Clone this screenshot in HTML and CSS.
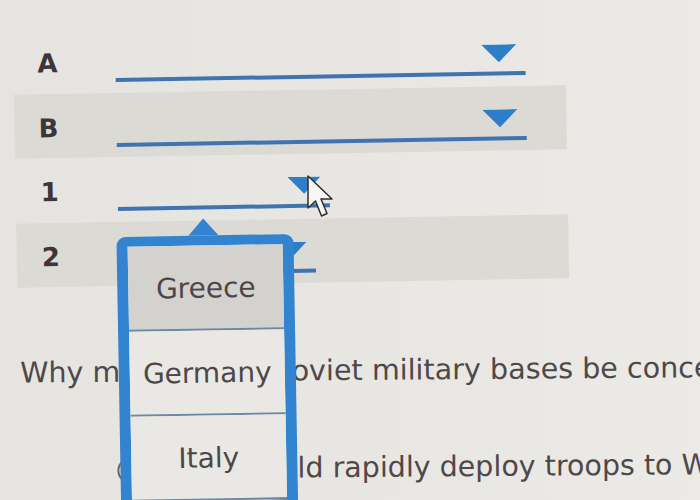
FILE: index.html
```html
<!DOCTYPE html>
<html lang="en">
<head>
<meta charset="utf-8">
<title>Matching</title>
<link rel="stylesheet" href="styles.css">
</head>
<body>
<div class="page">
  <div class="matches">
    <div class="row">
      <div class="label">A</div>
      <div class="select w-long">
        <svg class="caret" width="35" height="18" viewBox="0 0 35 18"><polygon points="0,0 35,0 17.5,18"/></svg>
      </div>
    </div>
    <div class="row band">
      <div class="label">B</div>
      <div class="select w-long">
        <svg class="caret" width="35" height="18" viewBox="0 0 35 18"><polygon points="0,0 35,0 17.5,18"/></svg>
      </div>
    </div>
    <div class="row">
      <div class="label">1</div>
      <div class="select w-mid">
        <svg class="caret" width="33" height="17" viewBox="0 0 33 17"><polygon points="0,0 33,0 16.5,17"/></svg>
      </div>
    </div>
    <div class="row band">
      <div class="label">2</div>
      <div class="select w-short">
        <svg class="caret" width="33" height="17" viewBox="0 0 33 17"><polygon points="0,0 33,0 16.5,17"/></svg>
        <ul class="menu">
          <li class="item active">Greece</li>
          <li class="item">Germany</li>
          <li class="item">Italy</li>
        </ul>
      </div>
    </div>
  </div>

  <div class="question">
    <p class="q-text">Why might these Soviet military bases be concerning to the United States?</p>
    <div class="option"><span class="radio"></span><span class="opt-text">They could rapidly deploy troops to Western Europe.</span></div>
  </div>

  <svg class="cursor" width="30" height="44" viewBox="0 0 30 44"><path d="M1 1 L1 33 L8.5 26 L14.5 41 L20 38.5 L14 24 L25 24 Z"/></svg>
</div>
</body>
</html>
```

FILE: styles.css
```css
html, body {
  margin: 0;
  padding: 0;
  width: 700px;
  height: 500px;
  overflow: hidden;
  background: #e8e6e2;
  font-family: "DejaVu Sans", Verdana, sans-serif;
}

.page {
  position: relative;
  width: 700px;
  height: 500px;
  overflow: hidden;
  background: linear-gradient(90deg, #e6e4e0 0%, #e9e7e3 60%, #ebeae6 100%);
}

.matches {
  position: relative;
  z-index: 2;
  margin: 24.5px 0 0 14.5px;
  width: 552px;
  transform: rotate(-1deg);
}

.row {
  display: flex;
  align-items: flex-start;
  height: 64.5px;
}

.band {
  background: #dcdad5;
}

.label {
  width: 68px;
  padding-top: 21px;
  text-align: center;
  font-weight: bold;
  font-size: 26px;
  line-height: 26px;
  color: #3d3639;
}

.select {
  position: relative;
  box-sizing: border-box;
  margin-left: 34px;
  height: 54px;
  padding: 23px 9px 0 0;
  border-bottom: 4px solid #3e74b0;
  display: flex;
  justify-content: flex-end;
  align-items: flex-start;
}

.w-long { width: 410px; }
.w-mid { width: 212px; }
.w-short { width: 197px; }

.caret polygon {
  fill: #2d7ec9;
}

.menu {
  position: absolute;
  left: -2px;
  top: 15.5px;
  z-index: 3;
  box-sizing: border-box;
  width: 177px;
  margin: 0;
  padding: 0;
  list-style: none;
  border: 10px solid #3384d0;
  border-left-width: 11px;
  border-right-width: 11px;
  border-radius: 9px 9px 0 0;
  background: #eae8e4;
}

.menu::before {
  content: "";
  position: absolute;
  top: -27px;
  left: 61px;
  border-left: 15px solid transparent;
  border-right: 15px solid transparent;
  border-bottom: 17px solid #3384d0;
}

.item {
  height: 83px;
  line-height: 86px;
  border-bottom: 2px solid #6d87a6;
  text-align: center;
  font-size: 28px;
  color: #4d4748;
  background: #eae8e4;
}

.item.active {
  background: #d3d2cf;
}

.question {
  margin-top: 67.3px;
  transform: rotate(-0.45deg);
}

.q-text {
  margin: 0;
  padding-left: 20.5px;
  font-size: 28.6px;
  line-height: 40px;
  white-space: nowrap;
  color: #4e4849;
}

.option {
  margin-top: 57.7px;
  height: 40px;
  padding-left: 117px;
  display: flex;
  align-items: center;
  gap: 24px;
  font-size: 28.5px;
  line-height: 40px;
  white-space: nowrap;
  color: #4e4849;
}

.radio {
  flex: none;
  box-sizing: border-box;
  width: 26px;
  height: 26px;
  margin-top: 3px;
  border: 2px solid #6a6466;
  border-radius: 50%;
}

.cursor {
  position: absolute;
  left: 307px;
  top: 175px;
  z-index: 10;
}

.cursor path {
  fill: #f6f6f4;
  stroke: #2e2e2e;
  stroke-width: 1.5;
  stroke-linejoin: round;
}
```
